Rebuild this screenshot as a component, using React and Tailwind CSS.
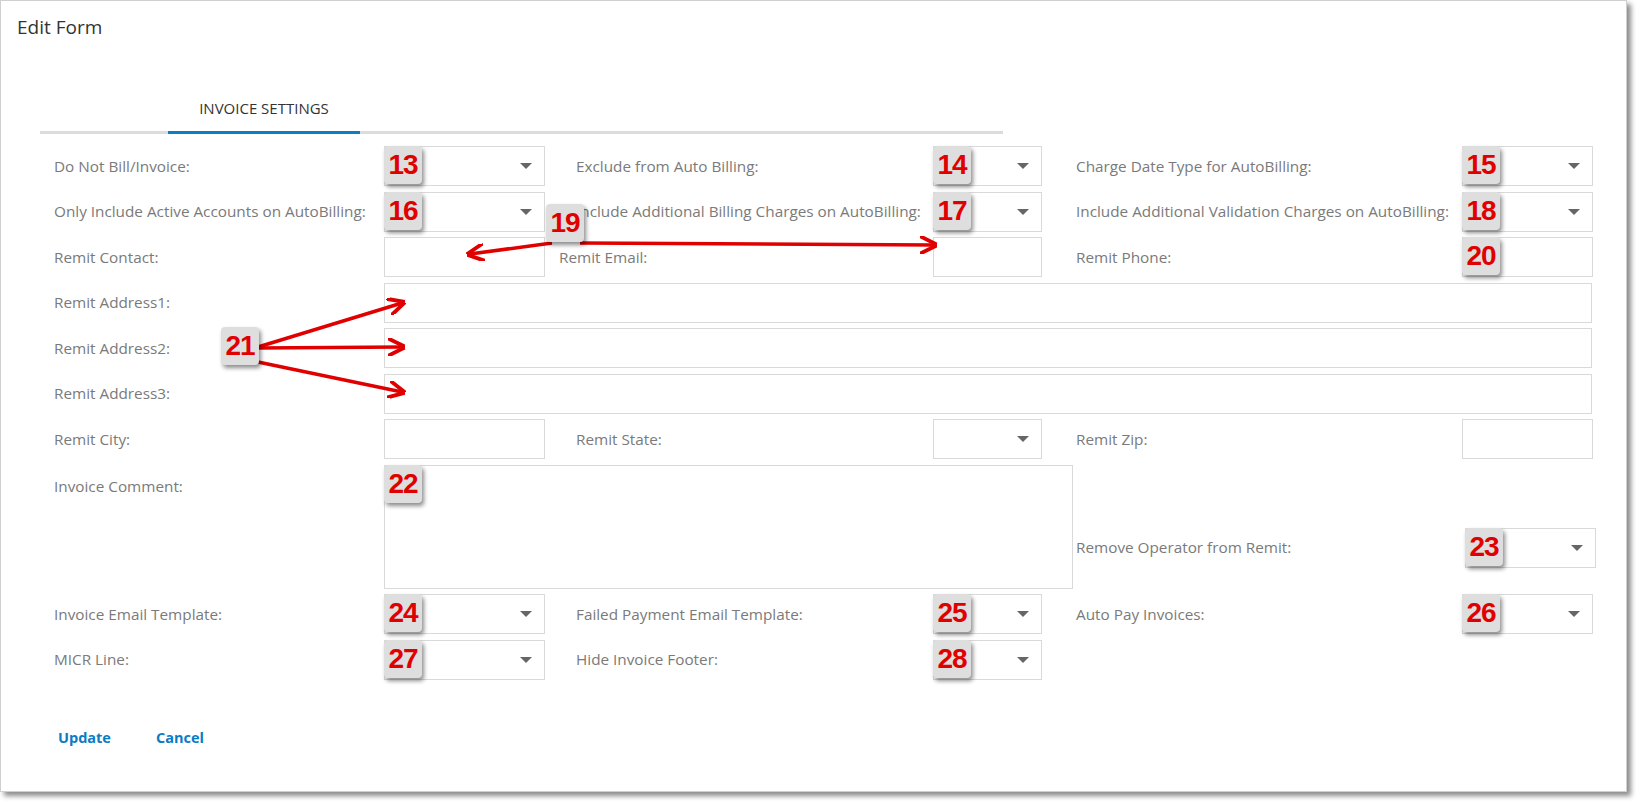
const F = { fontFamily: '"Open Sans", "Liberation Sans", sans-serif' };

function Badge({ n, className = "" }) {
  return (
    <div
      className={"absolute w-[38px] h-[38px] rounded-[4px] bg-[#dedede] flex items-center justify-center shadow-[2px_3px_4px_rgba(0,0,0,0.45)] z-10 " + className}
      style={{ fontFamily: '"Liberation Sans", Arial, sans-serif' }}
    >
      <span className="text-[28px] font-bold text-[#e00000] leading-none tracking-[-1px]">{n}</span>
    </div>
  );
}

function Input({ w, select, badge, h = 40 }) {
  return (
    <div className={"relative shrink-0 border border-[#d9d9d9] bg-white " + w} style={{ height: h }}>
      {select && (
        <div className="absolute right-[12px] top-1/2 -translate-y-1/2 w-0 h-0 border-l-[6px] border-r-[6px] border-t-[6px] border-l-transparent border-r-transparent border-t-[#666]" />
      )}
      {badge && <Badge n={badge} className="-left-px -top-px" />}
    </div>
  );
}

function Label({ children, w, className = "" }) {
  return <div className={"shrink-0 text-[15.3px] text-[#7a7a7a] whitespace-nowrap " + w + " " + className}>{children}</div>;
}

function Row({ c1, c2, c3 }) {
  return (
    <div className="flex items-center h-[40px]">
      <Label w="w-[330px]">{c1[0]}</Label>
      <Input w="w-[161px]" select={c1[1]} badge={c1[2]} />
      {c2 ? (
        <>
          <Label w="w-[388px]" className={c2[3] || "pl-[31px]"}>{c2[0]}</Label>
          <Input w="w-[109px]" select={c2[1]} badge={c2[2]} />
        </>
      ) : null}
      {c3 ? (
        <>
          <Label w="w-[420px]" className="pl-[34px]">{c3[0]}</Label>
          <Input w="w-[131px]" select={c3[1]} badge={c3[2]} />
        </>
      ) : null}
    </div>
  );
}

export default function App() {
  return (
    <div className="w-[1640px] h-[804px] bg-white relative overflow-hidden" style={F}>
      <div className="w-[1627px] h-[792px] border border-[#cfcfcf] bg-white shadow-[4px_4px_5px_rgba(0,0,0,0.45)] flex flex-col">
        <div className="pl-[16px] pt-[12px] text-[19px] text-[#333]">Edit Form</div>
        <div className="mt-[55px] ml-[39px] w-[963px] border-b-[3px] border-[#dcdcdc] flex">
          <div className="ml-[128px] w-[192px] text-center text-[15px] text-[#333] pb-[12px] -mb-[3px] border-b-[3px] border-[#0a7fc9]">INVOICE SETTINGS</div>
        </div>
        <div className="pl-[53px] pt-[12px] flex flex-col gap-[5.5px]">
          <Row c1={["Do Not Bill/Invoice:", true, 13]} c2={["Exclude from Auto Billing:", true, 14]} c3={["Charge Date Type for AutoBilling:", true, 15]} />
          <Row c1={["Only Include Active Accounts on AutoBilling:", true, 16]} c2={["Include Additional Billing Charges on AutoBilling:", true, 17]} c3={["Include Additional Validation Charges on AutoBilling:", true, 18]} />
          <Row c1={["Remit Contact:", false]} c2={["Remit Email:", false, null, "pl-[14px]"]} c3={["Remit Phone:", false, 20]} />
          {["Remit Address1:", "Remit Address2:", "Remit Address3:"].map((l) => (
            <div key={l} className="flex items-center h-[40px]">
              <Label w="w-[330px]">{l}</Label>
              <Input w="w-[1208px]" />
            </div>
          ))}
          <Row c1={["Remit City:", false]} c2={["Remit State:", true]} c3={["Remit Zip:", false]} />
          <div className="flex items-start">
            <Label w="w-[330px]" className="pt-[10px]">Invoice Comment:</Label>
            <Input w="w-[689px]" h={124} badge={22} />
            <div className="flex items-center h-[124px] pt-[42px]">
              <Label w="w-[392px]" className="pl-[3px]">Remove Operator from Remit:</Label>
              <Input w="w-[131px]" select badge={23} />
            </div>
          </div>
          <Row c1={["Invoice Email Template:", true, 24]} c2={["Failed Payment Email Template:", true, 25]} c3={["Auto Pay Invoices:", true, 26]} />
          <Row c1={["MICR Line:", true, 27]} c2={["Hide Invoice Footer:", true, 28]} />
        </div>
        <div className="pl-[57px] mt-[47px] flex gap-[45px] text-[14.5px] font-bold text-[#0a7bc4]">
          <span>Update</span>
          <span>Cancel</span>
        </div>
      </div>

      <Badge n={19} className="left-[546px] top-[204px]" />
      <Badge n={21} className="left-[221px] top-[327px]" />

      <svg className="absolute left-0 top-0 pointer-events-none z-[5]" width="1640" height="804">
        <defs>
          <marker id="ah" viewBox="0 0 10 10" refX="8" refY="5" markerWidth="5" markerHeight="5" orient="auto-start-reverse">
            <path d="M0 0 L10 5 L0 10" fill="none" stroke="#e00000" strokeWidth="2.2" />
          </marker>
        </defs>
        <g stroke="#e00000" strokeWidth="3.5" fill="none" markerEnd="url(#ah)">
          <line x1="552" y1="243" x2="470" y2="254" />
          <line x1="580" y1="243" x2="934" y2="245" />
          <line x1="258" y1="347" x2="402" y2="303" />
          <line x1="258" y1="348" x2="402" y2="347" />
          <line x1="258" y1="362" x2="402" y2="392" />
        </g>
      </svg>
    </div>
  );
}
